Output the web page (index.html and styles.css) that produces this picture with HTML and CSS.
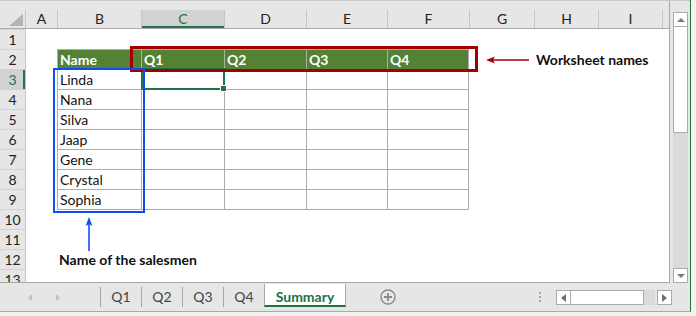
FILE: index.html
```html
<!DOCTYPE html>
<html>
<head>
<meta charset="utf-8">
<title>Summary</title>
<link rel="stylesheet" href="styles.css">
</head>
<body>
<div class="window">
  <div class="main">
    <div class="sheet">
      <div class="row hdr">
        <div class="corner"><svg width="14" height="12" viewBox="0 0 14 12"><path d="M14 0V12H0Z" fill="#b4b4b4"/></svg></div>
        <div class="ch">A</div><div class="ch">B</div><div class="ch sel">C</div><div class="ch">D</div><div class="ch">E</div><div class="ch">F</div><div class="ch">G</div><div class="ch">H</div><div class="ch">I</div><div class="ch"></div>
      </div>
      <div class="row"><div class="rh">1</div></div>
      <div class="row"><div class="rh">2</div><div></div><div class="t th">Name</div><div class="t th">Q1</div><div class="t th">Q2</div><div class="t th">Q3</div><div class="t th last">Q4</div></div>
      <div class="row"><div class="rh sel">3</div><div></div><div class="t">Linda</div><div class="t"></div><div class="t"></div><div class="t"></div><div class="t last"></div></div>
      <div class="row"><div class="rh">4</div><div></div><div class="t">Nana</div><div class="t"></div><div class="t"></div><div class="t"></div><div class="t last"></div></div>
      <div class="row"><div class="rh">5</div><div></div><div class="t">Silva</div><div class="t"></div><div class="t"></div><div class="t"></div><div class="t last"></div></div>
      <div class="row"><div class="rh">6</div><div></div><div class="t">Jaap</div><div class="t"></div><div class="t"></div><div class="t"></div><div class="t last"></div></div>
      <div class="row"><div class="rh">7</div><div></div><div class="t">Gene</div><div class="t"></div><div class="t"></div><div class="t"></div><div class="t last"></div></div>
      <div class="row"><div class="rh">8</div><div></div><div class="t">Crystal</div><div class="t"></div><div class="t"></div><div class="t"></div><div class="t last"></div></div>
      <div class="row end"><div class="rh">9</div><div></div><div class="t">Sophia</div><div class="t"></div><div class="t"></div><div class="t"></div><div class="t last"></div></div>
      <div class="row"><div class="rh">10</div></div>
      <div class="row"><div class="rh">11</div></div>
      <div class="row"><div class="rh">12</div></div>
      <div class="row"><div class="rh">13</div></div>
    </div>
    <div class="vscroll">
      <div class="vbtn"><svg width="8" height="4" viewBox="0 0 8 4"><path d="M0 4L4 0L8 4Z" fill="#7a7a7a"/></svg></div>
      <div class="vthumb"></div>
      <div class="vtrack"></div>
      <div class="vbtn"><svg width="8" height="4" viewBox="0 0 8 4"><path d="M0 0L4 4L8 0Z" fill="#7a7a7a"/></svg></div>
    </div>
  </div>
  <div class="tabbar">
    <div class="nav">
      <svg class="nl" width="4" height="7" viewBox="0 0 4 7"><path d="M4 0L0 3.5L4 7Z" fill="#c2c2c2"/></svg>
      <svg class="nr" width="4" height="7" viewBox="0 0 4 7"><path d="M0 0L4 3.5L0 7Z" fill="#c2c2c2"/></svg>
    </div>
    <div class="tab">Q1</div>
    <div class="tab">Q2</div>
    <div class="tab">Q3</div>
    <div class="tab">Q4</div>
    <div class="tab active">Summary</div>
    <div class="plus"><svg width="16" height="16" viewBox="0 0 16 16"><circle cx="8" cy="8" r="7" fill="none" stroke="#8a8a8a" stroke-width="1.4"/><path d="M8 4V12M4 8H12" stroke="#8a8a8a" stroke-width="1.8"/></svg></div>
    <div class="dots"><span></span><span></span><span></span></div>
    <div class="hscroll">
      <div class="hbtn"><svg width="5" height="8" viewBox="0 0 5 8"><path d="M5 0L0 4L5 8Z" fill="#6e6e6e"/></svg></div>
      <div class="hthumb"></div>
      <div class="htrack"></div>
      <div class="hgap"></div>
      <div class="hbtn"><svg width="5" height="8" viewBox="0 0 5 8"><path d="M0 0L5 4L0 8Z" fill="#6e6e6e"/></svg></div>
    </div>
  </div>

  <div class="selection"><span class="handle"></span></div>
  <div class="redbox"></div>
  <div class="bluebox"></div>
  <svg class="redarrow" width="44" height="10" viewBox="0 0 44 10"><path d="M4 5H43" stroke="#a00000" stroke-width="1.6"/><path d="M0 5L9 1.6L7 5L9 8.4Z" fill="#a00000"/></svg>
  <div class="note ws">Worksheet names</div>
  <svg class="bluearrow" width="10" height="36" viewBox="0 0 10 36"><path d="M5 6V35" stroke="#0c4ff0" stroke-width="1.6"/><path d="M5 1L1.6 10L5 8L8.4 10Z" fill="#0c4ff0"/></svg>
  <div class="note sm">Name of the salesmen</div>
</div>
</body>
</html>
```
FILE: styles.css
```css
html, body {
  margin: 0;
  padding: 0;
}
body {
  background: #f2f2f2;
  font-family: Lato, "Noto Sans", sans-serif;
  width: 696px;
  height: 316px;
  overflow: hidden;
}
.window {
  position: relative;
  width: 691px;
  height: 312px;
  box-sizing: border-box;
  background: #e6e6e6;
  border-right: 1px solid #217346;
  border-bottom: 1px solid #a9a9a9;
}
.main {
  display: flex;
  height: 284px;
  box-sizing: border-box;
  border-top: 1px solid #c8c8c8;
}
.sheet {
  width: 670px;
  height: 282px;
  box-sizing: border-box;
  padding-top: 9px;
  border-right: 1px solid #a6a6a6;
  border-bottom: 1px solid #a6a6a6;
  overflow: hidden;
  background: #e6e6e6;
}
.row {
  display: grid;
  grid-template-columns: 26px 31px 84px 83px 82px 81px 82px 65px 64px 64px 1fr;
  height: 20px;
  background: #fff;
  font-size: 14px;
  color: #111;
}
.row.hdr {
  height: 19px;
  box-sizing: border-box;
  background: #e6e6e6;
  border-bottom: 1px solid #ababab;
}
.corner {
  display: flex;
  justify-content: flex-end;
  align-items: flex-end;
  padding: 0 2px 2px 0;
  border-right: 1px solid #c6c6c6;
}
.ch {
  border-left: 1px solid #c6c6c6;
  text-align: center;
  line-height: 18px;
  font-size: 14px;
  color: #222;
}
.corner + .ch {
  border-left: none;
}
.ch.sel {
  background: #d2d2d2;
  color: #217346;
  box-shadow: inset 0 -2px 0 #217346;
}
.rh {
  background: #e6e6e6;
  border-top: 1px solid #d2d2d2;
  border-right: 1px solid #c6c6c6;
  text-align: center;
  line-height: 19px;
  font-size: 14px;
  color: #222;
}
.rh.sel {
  background: #d2d2d2;
  color: #217346;
  box-shadow: inset -2px 0 0 #217346;
}
.t {
  border-left: 1px solid #acacac;
  border-top: 1px solid #acacac;
  padding-left: 2px;
  line-height: 19px;
  font-size: 14px;
  color: #111;
}
.t.last {
  border-right: 1px solid #acacac;
}
.row.end .t {
  border-bottom: 1px solid #acacac;
}
.t.th {
  background: #548235;
  color: #fff;
  font-weight: 700;
  border-left-color: #a8b69c;
}
.t.th:first-of-type {
  border-left-color: #acacac;
}
.vscroll {
  width: 15px;
  margin-left: 3px;
  margin-top: 11px;
  height: 271px;
  display: flex;
  flex-direction: column;
}
.vbtn {
  height: 15px;
  box-sizing: border-box;
  border: 1px solid #ababab;
  background: #fff;
  display: flex;
  align-items: center;
  justify-content: center;
  flex-shrink: 0;
}
.vthumb {
  height: 106px;
  box-sizing: border-box;
  border: 1px solid #ababab;
  border-top: none;
  background: #fff;
  flex-shrink: 0;
}
.vtrack {
  flex: 1;
  background: #dadada;
}
.tabbar {
  display: flex;
  align-items: flex-start;
  height: 27px;
  font-size: 14px;
}
.nav {
  width: 100px;
  height: 27px;
  display: flex;
  align-items: center;
}
.nav .nl {
  margin-left: 28px;
}
.nav .nr {
  margin-left: 24px;
}
.tab {
  width: 41px;
  height: 20px;
  margin-top: 3px;
  box-sizing: border-box;
  border-left: 1px solid #a6a6a6;
  text-align: center;
  line-height: 20px;
  color: #444;
}
.tab.active {
  width: 82px;
  height: 23px;
  margin-top: 0;
  padding-top: 4px;
  line-height: 17px;
  background: #fff;
  border-right: 1px solid #a6a6a6;
  border-bottom: 2px solid #217346;
  color: #217346;
  font-weight: 700;
}
.plus {
  margin-left: 34px;
  margin-top: 5px;
  height: 16px;
}
.dots {
  margin-left: auto;
  margin-top: 8px;
  margin-right: 15px;
  display: flex;
  flex-direction: column;
  gap: 2px;
}
.dots span {
  width: 2px;
  height: 2px;
  background: #a6a6a6;
}
.hscroll {
  display: flex;
  height: 15px;
  margin-top: 6px;
  margin-right: 18px;
}
.hbtn {
  width: 15px;
  box-sizing: border-box;
  border: 1px solid #ababab;
  background: #fff;
  display: flex;
  align-items: center;
  justify-content: center;
}
.hthumb {
  width: 73px;
  box-sizing: border-box;
  border: 1px solid #ababab;
  border-left: none;
  background: #fff;
}
.htrack {
  width: 11px;
  background: #dadada;
}
.hgap {
  width: 2px;
}
.selection {
  position: absolute;
  left: 141px;
  top: 68px;
  width: 84px;
  height: 22px;
  box-sizing: border-box;
  border: 2px solid #217346;
}
.handle {
  position: absolute;
  right: -3px;
  bottom: -3px;
  width: 5px;
  height: 5px;
  background: #217346;
  box-shadow: 0 0 0 1px #fff;
}
.redbox {
  position: absolute;
  left: 130px;
  top: 46px;
  width: 348px;
  height: 26px;
  box-sizing: border-box;
  border: 3px solid #a50000;
}
.bluebox {
  position: absolute;
  left: 53px;
  top: 68px;
  width: 92px;
  height: 145px;
  box-sizing: border-box;
  border: 2px solid #0c4ff0;
}
.redarrow {
  position: absolute;
  left: 486px;
  top: 55px;
}
.bluearrow {
  position: absolute;
  left: 84px;
  top: 216px;
}
.note {
  position: absolute;
  font-weight: 700;
  font-size: 14px;
  line-height: 18px;
  color: #111;
  white-space: nowrap;
}
.note.ws {
  left: 536px;
  top: 51px;
}
.note.sm {
  left: 59px;
  top: 251px;
}
```
